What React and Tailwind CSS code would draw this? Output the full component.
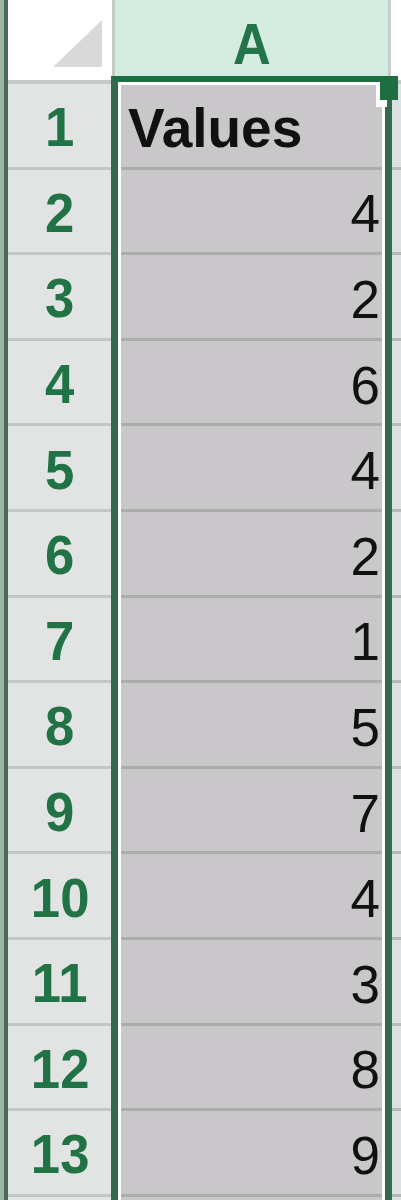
import React from "react";

const values = ["4", "2", "6", "4", "2", "1", "5", "7", "4", "3", "8", "9", ""];

export default function App() {
  const rows = Array.from({ length: 14 }, (_, i) => i + 1);
  return (
    <div className="relative w-[401px] h-[1200px] overflow-hidden bg-white flex font-['Liberation_Sans',Arial,sans-serif]">
      <div className="w-[4px] shrink-0 bg-[#9db6a7]" />
      <div className="w-[4px] shrink-0 bg-[#4b6a57]" />

      {/* row headers */}
      <div className="w-[104px] shrink-0 flex flex-col">
        <div className="h-[80px] shrink-0 bg-white flex items-end justify-end pr-[10px] pb-[13px]">
          <svg width="49" height="47" viewBox="0 0 49 47">
            <polygon points="49,0 49,47 0,47" fill="#d9d9d9" />
          </svg>
        </div>
        <div className="h-[4px] shrink-0 bg-[#c5c8c6]" />
        {rows.map((r) => (
          <div
            key={r}
            className="h-[85.6px] shrink-0 border-b-[3px] border-[#c3c6c4] bg-[#e1e4e2] flex items-center justify-center"
          >
            <span className="text-[56px] leading-none font-bold text-[#217346] scale-x-[0.94] inline-block translate-y-[2px]">
              {r <= 13 ? r : ""}
            </span>
          </div>
        ))}
      </div>

      {/* column A */}
      <div className="w-[276px] shrink-0 flex flex-col">
        <div className="h-[80px] shrink-0 border-l-[3px] border-[#c4cbc7] bg-[#d4ecdf] flex items-start justify-center pt-[15px]">
          <span className="text-[58px] leading-none font-bold text-[#23744a] scale-x-[0.9] inline-block">
            A
          </span>
        </div>
        <div className="h-[4px] shrink-0 bg-[#c5c8c6]" />
        {rows.map((r, i) => (
          <div
            key={r}
            className="h-[85.6px] shrink-0 border-b-[3px] border-[#acacac] bg-[#c9c7c9] flex items-center"
          >
            {r === 1 ? (
              <span className="pl-[16px] text-[55px] leading-none font-bold text-[#111] translate-y-[3px] inline-block">
                Values
              </span>
            ) : (
              <span className="ml-auto pr-[8px] text-[53px] leading-none text-[#111] translate-y-[3px] inline-block">
                {values[i - 1] ?? ""}
              </span>
            )}
          </div>
        ))}
      </div>

      {/* column B */}
      <div className="flex-1 flex flex-col">
        <div className="h-[80px] shrink-0 border-l-[3px] border-[#c8cdca] bg-white" />
        <div className="h-[4px] shrink-0 bg-[#c5c8c6]" />
        {rows.map((r) => (
          <div
            key={r}
            className="h-[85.6px] shrink-0 border-b-[3px] border-[#b4bab8] bg-[#dce2e1]"
          />
        ))}
      </div>

      {/* selection border overlay */}
      <div className="absolute left-[111px] top-[76px] w-[281px] h-[1124px] border-x-[7px] border-t-[6px] border-x-[#33694d] border-t-[#1f6e42]">
        <div className="h-full border-x-[3px] border-t-[3px] border-white" />
      </div>

      {/* corner handle */}
      <svg
        className="absolute left-[374px] top-[76px]"
        width="27"
        height="34"
        viewBox="0 0 27 34"
      >
        <rect x="2" y="6" width="4" height="25" fill="#ffffff" />
        <rect x="2" y="24" width="11" height="7" fill="#ffffff" />
        <rect x="6" y="0" width="18" height="24" fill="#1f6e42" />
      </svg>
    </div>
  );
}
